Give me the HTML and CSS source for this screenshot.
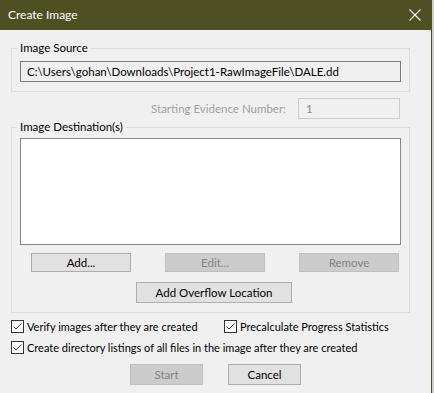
FILE: index.html
```html
<!DOCTYPE html>
<html>
<head>
<meta charset="utf-8">
<link rel="stylesheet" href="styles.css">
</head>
<body>
<div class="window">
  <div class="titlebar">
    <span class="title">Create Image</span>
    <svg class="close" width="12" height="12" viewBox="0 0 12 12"><path d="M0.5 0.5 L11.5 11.5 M11.5 0.5 L0.5 11.5" stroke="#fff" stroke-width="1.1" fill="none"/></svg>
  </div>
  <div class="content">
    <fieldset class="group src">
      <legend>Image Source</legend>
      <div class="textbox readonly">C:\Users\gohan\Downloads\Project1-RawImageFile\DALE.dd</div>
    </fieldset>
    <div class="evidence-row">
      <span class="label-disabled">Starting Evidence Number:</span>
      <div class="textbox small disabled">1</div>
    </div>
    <fieldset class="group dest">
      <legend>Image Destination(s)</legend>
      <div class="listbox"></div>
      <div class="btn-row">
        <button class="btn wide">Add...</button>
        <button class="btn wide disabled">Edit...</button>
        <button class="btn wide disabled">Remove</button>
      </div>
      <button class="btn overflow">Add Overflow Location</button>
    </fieldset>
    <div class="checks">
      <div class="check-row two">
        <label class="check"><span class="box"><svg width="11" height="11" viewBox="0 0 11 11"><path d="M1.5 5.5 L4 8 L9.5 2.5" stroke="#333" stroke-width="1" fill="none"/></svg></span>Verify images after they are created</label>
        <label class="check"><span class="box"><svg width="11" height="11" viewBox="0 0 11 11"><path d="M1.5 5.5 L4 8 L9.5 2.5" stroke="#333" stroke-width="1" fill="none"/></svg></span>Precalculate Progress Statistics</label>
      </div>
      <div class="check-row">
        <label class="check"><span class="box"><svg width="11" height="11" viewBox="0 0 11 11"><path d="M1.5 5.5 L4 8 L9.5 2.5" stroke="#333" stroke-width="1" fill="none"/></svg></span>Create directory listings of all files in the image after they are created</label>
      </div>
    </div>
    <div class="actions">
      <button class="btn action disabled">Start</button>
      <button class="btn action">Cancel</button>
    </div>
  </div>
</div>
</body>
</html>
```

FILE: styles.css
```css
* { box-sizing: border-box; }
html, body { margin: 0; padding: 0; }
body {
  background: #cfcfcf;
  font-family: Lato, "Noto Sans", sans-serif;
  font-size: 11px;
  color: #000;
  width: 434px;
  height: 393px;
  overflow: hidden;
}
.window {
  width: 432px;
  height: 393px;
  background: #f0f0f0;
  border-right: 1px solid #4e5024;
}
.titlebar {
  height: 30px;
  background: #4e5024;
  color: #fff;
  display: flex;
  align-items: center;
  justify-content: space-between;
  padding: 0 10px 0 8px;
}
.title { font-size: 12px; line-height: 30px; }
.close { display: block; margin-top: -1px; }
.content {
  padding: 10px 21px 0 11px;
}
.group {
  margin: 0;
  border: 1px solid #dcdcdc;
  padding: 5px 8px 9px 8px;
  min-width: 0;
}
.group legend {
  padding: 0 3px;
  margin-left: -3px;
  line-height: 16px;
  font-size: 11.5px;
}
.textbox {
  height: 21px;
  border: 1px solid #7a7a7a;
  padding-left: 6px;
  line-height: 19px;
  white-space: nowrap;
  overflow: hidden;
  font-size: 11.5px;
}
.readonly { background: #f0f0f0; }
.evidence-row {
  margin-top: 6px;
  display: flex;
  justify-content: flex-end;
  align-items: center;
  gap: 12px;
  padding-right: 10px;
}
.label-disabled { color: #a0a0a0; font-size: 11.5px; }
.textbox.small {
  width: 102px;
  border-color: #cccccc;
  color: #8a8a8a;
  padding-left: 7px;
}
.dest { padding-top: 3px; }
.listbox {
  height: 107px;
  border: 1px solid #828790;
  background: #fff;
}
.btn {
  font-family: inherit;
  font-size: 11.5px;
  color: #000;
  background: #e1e1e1;
  border: 1px solid #adadad;
  padding: 0;
  margin: 0;
  display: block;
}
.btn.disabled {
  background: #cccccc;
  border-color: #bfbfbf;
  color: #838383;
}
.btn-row {
  margin-top: 8px;
  display: flex;
  justify-content: space-between;
  padding: 0 2px 0 11px;
}
.btn.wide { width: 100px; height: 19px; line-height: 17px; }
.btn.overflow {
  width: 156px;
  height: 21px;
  line-height: 19px;
  margin: 10px 0 0 116px;
}
.checks {
  margin-top: 7px;
  display: flex;
  flex-direction: column;
  gap: 8px;
}
.check-row { display: flex; height: 13px; align-items: center; }
.check-row.two { display: grid; grid-template-columns: 213px auto; }
.check {
  display: flex;
  align-items: center;
  gap: 3px;
  line-height: 13px;
  white-space: nowrap;
}
.box {
  width: 13px;
  height: 13px;
  border: 1px solid #333;
  background: #fff;
  display: flex;
  align-items: center;
  justify-content: center;
  flex: none;
}
.box svg { display: block; }
.actions {
  margin-top: 10px;
  display: flex;
  gap: 25px;
  padding-left: 119px;
}
.btn.action { width: 73px; height: 21px; line-height: 19px; }
```
